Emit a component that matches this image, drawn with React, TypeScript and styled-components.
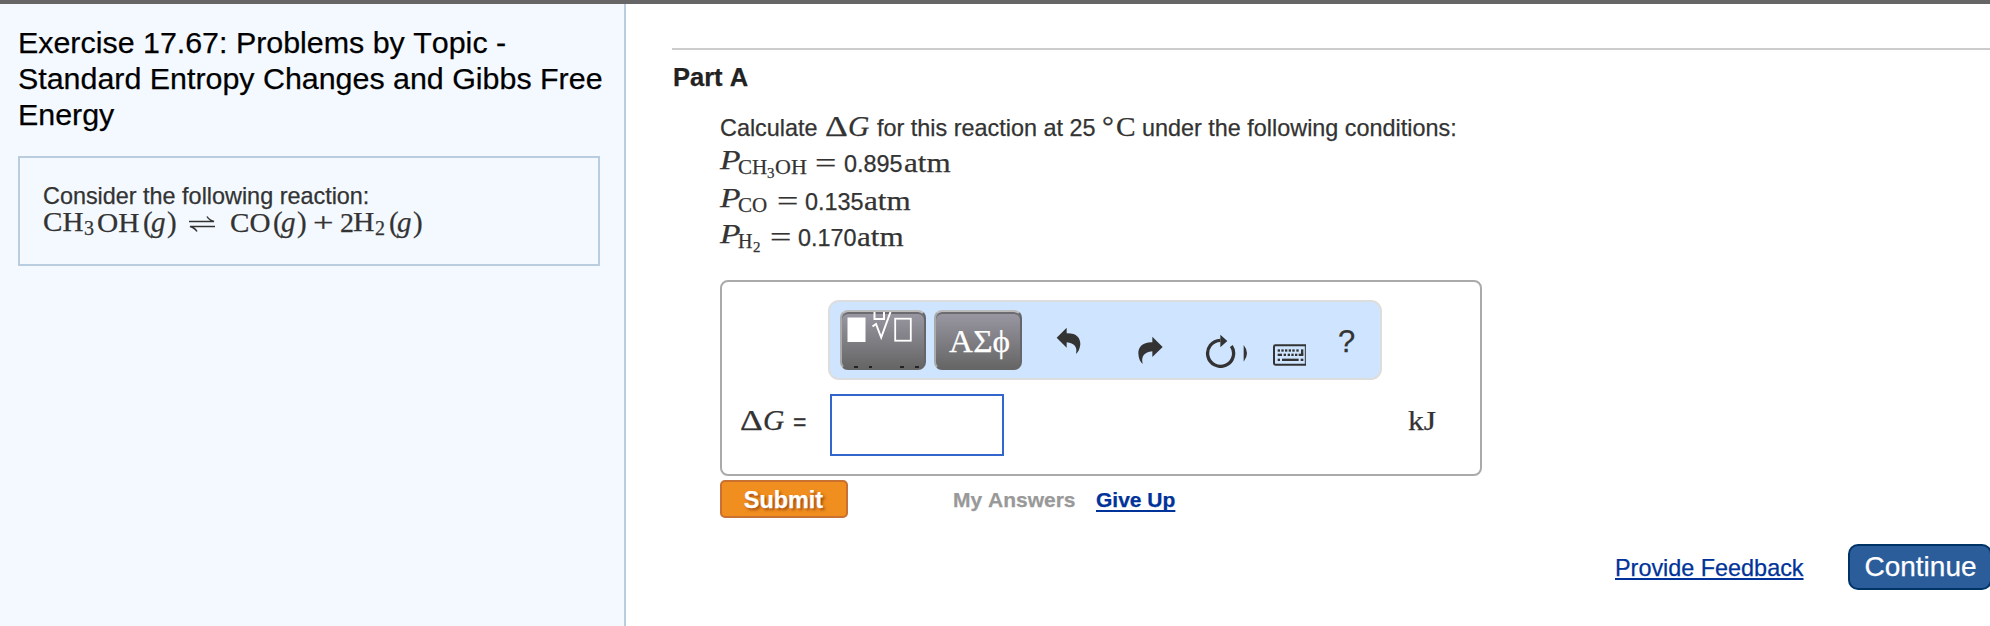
import React from "react";
import styled, { createGlobalStyle, css } from "styled-components";

const sans = `"Liberation Sans", Arial, Helvetica, sans-serif`;
const serif = `"Liberation Serif", "Times New Roman", serif`;

const GlobalStyle = createGlobalStyle`
  *, *::before, *::after { box-sizing: border-box; }
  body {
    margin: 0;
    background: #fff;
    color: #333;
    font-family: ${sans};
    font-kerning: none;
    -webkit-text-stroke: 0.25px currentColor;
    overflow: hidden;
  }
  button { font-kerning: none; }
`;

const Page = styled.div`
  display: flex;
  height: 626px;
  border-top: 4px solid #666;
  overflow: hidden;
`;

const Sidebar = styled.aside`
  flex: 0 0 626px;
  padding: 16px 0 0 18px;
  background: #f4f9ff;
  border-right: 2px solid #bacddf;
`;

const Title = styled.h1`
  margin: 4px 0 0;
  color: #000;
  font-size: 30.4px;
  font-weight: 400;
  line-height: 36px;
  white-space: nowrap;
`;

const ReactionBox = styled.section`
  width: 582px;
  height: 110px;
  margin-top: 24px;
  padding: 25px 0 0 23px;
  border: 2px solid #bacddf;
`;

const Main = styled.main`
  flex: 1;
  min-width: 0;
  padding: 44px 0 0 46px;
`;

const Part = styled.section`
  border-top: 2px solid #ccc;
`;

const PartTitle = styled.h2`
  margin: 12px 0 0 1px;
  color: #222;
  font-size: 25.5px;
  font-weight: 700;
  line-height: 30px;
`;

const Body = styled.div`
  padding: 18px 0 0 48px;
`;

const Line = styled.div<{ $lh?: number; $mt?: number }>`
  margin-top: ${(p) => p.$mt ?? 0}px;
  height: ${(p) => p.$lh ?? 36}px;
  font-size: 23.4px;
  line-height: ${(p) => p.$lh ?? 36}px;
  white-space: nowrap;
`;

type RunProps = { $w: number; $up?: number };

const Run = styled.span<RunProps>`
  display: inline-block;
  width: ${(p) => p.$w}px;
  line-height: 0;
  vertical-align: ${(p) => p.$up ?? 0}px;
`;

const MathRun = styled(Run)<{ $size?: number; $it?: boolean; $sx?: number }>`
  font-family: ${serif};
  font-size: ${(p) => p.$size ?? 28}px;
  ${(p) => p.$it && css`font-style: italic;`}
  ${(p) => p.$sx && css`transform: scaleX(${p.$sx}); transform-origin: 0 50%;`}
`;

const Harpoons = styled.svg`
  display: inline-block;
  width: 26px;
  height: 16px;
  margin-right: 15px;
  vertical-align: 0;
`;

const AnswerBox = styled.div`
  width: 762px;
  height: 196px;
  margin-top: 24px;
  padding: 18px 0 0 18px;
  border: 2px solid #aaa;
  border-radius: 8px;
`;

const Toolbar = styled.div`
  display: flex;
  align-items: flex-start;
  width: 554px;
  height: 80px;
  margin-left: 88px;
  padding: 8px 0 0 10px;
  background: #cfe5ff;
  border: 2px solid #ddd;
  border-radius: 11px;
`;

const ToolButton = styled.button<{ $w: number }>`
  width: ${(p) => p.$w}px;
  height: 60px;
  margin-right: 8px;
  padding: 0;
  border: 2px solid;
  border-color: #bbb #66666a #666 #aaa;
  border-radius: 8px;
  background: linear-gradient(#9a98a3, #666);
  box-shadow: inset 0 2px 0 #6c6b70;
  color: #fff;
  font: 32px/58px ${serif};
  overflow: hidden;
`;

const Greek = styled.span`
  display: block;
  padding-left: 3px;
  transform: scaleX(1.04);
`;

const TemplateArt = styled.svg`
  display: block;
  width: 82px;
  height: 56px;
`;

const ToolIcon = styled.svg<{ $w: number; $h: number; $ml: number; $mt: number }>`
  flex: none;
  width: ${(p) => p.$w}px;
  height: ${(p) => p.$h}px;
  margin: ${(p) => p.$mt}px 0 0 ${(p) => p.$ml}px;
  fill: #333;
`;

const Help = styled.span`
  margin: 14px 0 0 32px;
  font-size: 31px;
  line-height: 36px;
`;

const AnswerRow = styled.div`
  display: flex;
  margin-top: 14px;
  height: 62px;
`;

const AnswerLabel = styled.div`
  width: 90px;
  height: 54px;
  line-height: 56px;
  font-size: 23px;
  white-space: nowrap;
`;

const AnswerInput = styled.input`
  width: 174px;
  height: 62px;
  border: 2px solid #36c;
  background: #fff;
  outline: none;
`;

const Unit = styled.div`
  margin-left: 404px;
  line-height: 56px;
  font-size: 23px;
`;

const Actions = styled.div`
  display: flex;
  align-items: flex-start;
  margin-top: 4px;
`;

const Submit = styled.button`
  width: 128px;
  height: 38px;
  padding: 1px 1px 0 0;
  border: 2px solid #c97130;
  border-radius: 5px;
  background: #f08e1f;
  color: #fff;
  font: 700 23.4px/34px ${sans};
  text-shadow: 2px 2px 3px #a04a10;
`;

const MyAnswers = styled.span`
  margin-left: 105px;
  width: 143px;
  color: #999;
  font-size: 21px;
  font-weight: 700;
  line-height: 40px;
`;

const Link = styled.a<{ $bold?: boolean }>`
  color: #039;
  font-size: ${(p) => (p.$bold ? 21 : 23.4)}px;
  font-weight: ${(p) => (p.$bold ? 700 : 400)};
  line-height: 40px;
  text-decoration: underline;
  text-decoration-thickness: 2px;
  text-decoration-skip-ink: none;
  text-underline-offset: ${(p) => (p.$bold ? 3 : 2)}px;
  white-space: nowrap;
`;

const Footer = styled.footer`
  display: flex;
  align-items: flex-start;
  margin-top: 24px;
  padding-left: 943px;
`;

const FeedbackSlot = styled.div`
  flex: 0 0 233px;
  padding-top: 4px;
`;

const Continue = styled.button`
  flex: 0 0 144px;
  height: 46px;
  padding: 0 0 0 1px;
  border: 2px solid #036;
  border-radius: 10px;
  background: #2c5d9b;
  color: #fff;
  font: 28px/42px ${sans};
  text-align: center;
`;

const Gas = ({ g, end }: { g: number; end: number }) => (
  <>
    <MathRun $w={g} $size={29}>(</MathRun>
    <MathRun $w={16} $it $size={29}>g</MathRun>
    <MathRun $w={end} $size={29}>)</MathRun>
  </>
);

const Equals = ({ w }: { w: number }) => (
  <MathRun $w={w} $size={27} $sx={1.4}>=</MathRun>
);

const Atm = () => <MathRun $w={46} $size={27} $sx={1.15}>atm</MathRun>;

const keys: [number, number, number][] = [
  [743, 178, 7], [754, 178, 7], [765, 178, 7], [776, 178, 7], [787, 178, 7], [799, 178, 7],
  [743, 191, 13], [761, 191, 7], [773, 191, 7], [784, 191, 7], [795, 191, 7], [806, 191, 14],
  [743, 206, 7], [756, 206, 50], [812, 206, 8],
];

export default function App() {
  return (
    <>
      <GlobalStyle />
      <Page>
        <Sidebar>
          <Title>
            Exercise 17.67: Problems by Topic -<br />
            Standard Entropy Changes and Gibbs Free<br />
            Energy
          </Title>
          <ReactionBox>
            <Line $lh={26}>Consider the following reaction:</Line>
            <Line $lh={30}>
              <MathRun $w={41} $up={1} $sx={1.04}>CH</MathRun>
              <MathRun $w={13} $size={20} $up={-3}>3</MathRun>
              <MathRun $w={46} $sx={1.05}>OH</MathRun>
              <Gas g={8} end={22} />
              <Harpoons viewBox="0 0 26 16" fill="none" stroke="#333" strokeWidth="1.4">
                <path d="M0 5.5H25Q20 4 18 .5M26 10.5H1Q6 12 8 15.5" />
              </Harpoons>
              <MathRun $w={43} $sx={1.04}>CO</MathRun>
              <Gas g={8} end={16} />
              <MathRun $w={27} $size={28} $sx={1.3}>+</MathRun>
              <MathRun $w={13}>2</MathRun>
              <MathRun $w={22} $up={1} $sx={1.06}>H</MathRun>
              <MathRun $w={14} $size={20} $up={-3}>2</MathRun>
              <Gas g={8} end={10} />
            </Line>
          </ReactionBox>
        </Sidebar>
        <Main>
          <Part>
            <PartTitle>Part A</PartTitle>
            <Body>
              <Line>
                <Run $w={105}>Calculate</Run>
                <MathRun $w={23} $size={29} $sx={1.22}>Δ</MathRun>
                <MathRun $w={29} $it $size={29} $sx={1.02}>G</MathRun>
                <Run $w={225}>for this reaction at 25</Run>
                <MathRun $w={14} $size={27} $up={1} $sx={1.1}>°</MathRun>
                <MathRun $w={26} $size={28} $sx={1.05}>C</MathRun>
                <Run $w={316}>under the following conditions:</Run>
              </Line>
              <Line>
                <MathRun $w={18} $it $up={3} $sx={1.2}>P</MathRun>
                <MathRun $w={29} $size={21} $up={-2}>CH</MathRun>
                <MathRun $w={8} $size={15} $up={-6}>3</MathRun>
                <MathRun $w={40} $size={22} $up={-2}>OH</MathRun>
                <Equals w={29} />
                <Run $w={60}>0.895</Run>
                <Atm />
              </Line>
              <Line $mt={2}>
                <MathRun $w={18} $it $up={3} $sx={1.2}>P</MathRun>
                <MathRun $w={39} $size={21} $up={-2}>CO</MathRun>
                <Equals w={28} />
                <Run $w={59}>0.135</Run>
                <Atm />
              </Line>
              <Line>
                <MathRun $w={18} $it $up={3} $sx={1.2}>P</MathRun>
                <MathRun $w={15} $size={20} $up={-2}>H</MathRun>
                <MathRun $w={17} $size={15} $up={-6}>2</MathRun>
                <Equals w={28} />
                <Run $w={59}>0.170</Run>
                <Atm />
              </Line>
              <AnswerBox>
                <Toolbar>
                  <ToolButton $w={86}>
                    <TemplateArt viewBox="0 0 82 56">
                      <rect x="5.5" y="5.5" width="18" height="24.5" fill="#fff" />
                      <path d="M32.5 -3V7H42V-3M30.5 14.5L34 12L39.2 25.5L48.5 0" fill="none" stroke="#fff" strokeWidth="2" />
                      <rect x="53.2" y="6.7" width="15.6" height="22" fill="none" stroke="#fff" strokeWidth="1.8" />
                      <path d="M12 55H16M27 55H30M58 55H62M73 55H77" stroke="#222" strokeWidth="2" />
                    </TemplateArt>
                  </ToolButton>
                  <ToolButton $w={88}>
                    <Greek>ΑΣϕ</Greek>
                  </ToolButton>
                  <ToolIcon $w={25} $h={28} $ml={26} $mt={17} viewBox="78 112 75 84">
                    <path d="M80 144L110 114V131C140 130 151 145 151 164Q149 184 138 193Q145 162 110 158V174Z" />
                  </ToolIcon>
                  <ToolIcon $w={25} $h={28} $ml={57} $mt={26} viewBox="324 138 75 84">
                    <path d="M398 171L367 140V157C337 156 325 172 325 190Q326 212 338 222Q330 188 367 184V201Z" />
                  </ToolIcon>
                  <ToolIcon $w={43} $h={34} $ml={42} $mt={24} viewBox="525 130 129 102">
                    <path d="M604 166A39 39 0 1 1 571 149" fill="none" stroke="#333" strokeWidth="10" />
                    <path d="M571 132L592 151L571 170ZM641 163Q661 188 641 213Z" />
                  </ToolIcon>
                  <ToolIcon $w={33} $h={22} $ml={25} $mt={34} viewBox="729 162 99 66">
                    <path d="M828 166H736Q732 166 732 170V220Q732 224 736 224H828" fill="none" stroke="#333" strokeWidth="6" />
                    <path d="M826 166V224" stroke="#333" strokeWidth="3" />
                    {keys.map(([x, y, w]) => (
                      <rect key={`${x}-${y}`} x={x} y={y} width={w} height="7" />
                    ))}
                    <rect x="813" y="178" width="7" height="16" />
                  </ToolIcon>
                  <Help>?</Help>
                </Toolbar>
                <AnswerRow>
                  <AnswerLabel>
                    <MathRun $w={23} $size={29} $sx={1.22}>Δ</MathRun>
                    <MathRun $w={30} $it $size={29} $sx={1.02}>G</MathRun>=
                  </AnswerLabel>
                  <AnswerInput aria-label="Answer" />
                  <Unit>
                    <MathRun $w={28} $size={28} $sx={1.12}>kJ</MathRun>
                  </Unit>
                </AnswerRow>
              </AnswerBox>
              <Actions>
                <Submit>Submit</Submit>
                <MyAnswers>My Answers</MyAnswers>
                <Link $bold>Give Up</Link>
              </Actions>
            </Body>
          </Part>
          <Footer>
            <FeedbackSlot>
              <Link>Provide Feedback</Link>
            </FeedbackSlot>
            <Continue>Continue</Continue>
          </Footer>
        </Main>
      </Page>
    </>
  );
}
